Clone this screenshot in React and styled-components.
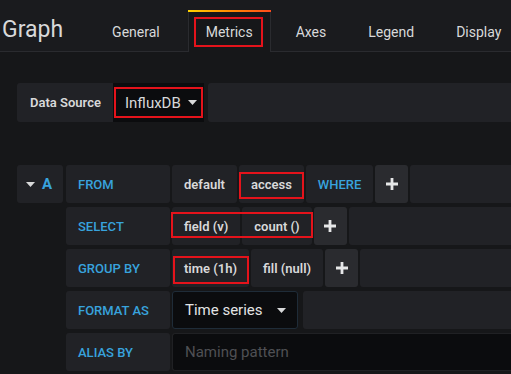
import styled, { createGlobalStyle } from "styled-components"

const GlobalStyle = createGlobalStyle`
    html, body {
        margin: 0;
        padding: 0;
        background: #161719;
        overflow: hidden;
    }
    body {
        font-family: Roboto, "Liberation Sans", sans-serif;
        color: #d8d9da;
    }
`

const tabs = ["General", "Metrics", "Axes", "Legend", "Display"]

const Caret = ({ color = "#d8d9da" }) => (
    <svg width="9" height="5" viewBox="0 0 9 5">
        <path d="M0 0h9L4.5 5z" fill={color} />
    </svg>
)

const PlusIcon = () => (
    <svg width="12" height="12" viewBox="0 0 12 12">
        <path d="M4.6 0h2.8v4.6H12v2.8H7.4V12H4.6V7.4H0V4.6h4.6z" fill="#e6e7e8" />
    </svg>
)

const App = () => {
    return (
        <>
            <GlobalStyle />
            <Header>
                <Title>Graph</Title>
                <Tabs>
                    {tabs.map(tab => (
                        <Tab key={tab} $active={tab === "Metrics"}>{tab}</Tab>
                    ))}
                </Tabs>
            </Header>

            <Main>
                <SourceRow>
                    <SourceLabel>Data Source</SourceLabel>
                    <Highlight $inset="4px 1px 4px 1px">
                        <Dropdown>
                            InfluxDB <Caret />
                        </Dropdown>
                    </Highlight>
                    <Filler $gap={4} />
                </SourceRow>

                <Query>
                    <Row>
                        <Toggle>
                            <Caret />
                            <span>A</span>
                        </Toggle>
                        <Keyword>FROM</Keyword>
                        <Segment>default</Segment>
                        <Highlight $inset="7px 0 4px 0">
                            <Segment>access</Segment>
                        </Highlight>
                        <Segment $blue>WHERE</Segment>
                        <Plus><PlusIcon /></Plus>
                        <Filler />
                    </Row>
                    <Row>
                        <Lead />
                        <Keyword>SELECT</Keyword>
                        <Highlight $inset="5px -1px 7px -1px">
                            <Segment>field (v)</Segment>
                            <Segment>count ()</Segment>
                        </Highlight>
                        <Plus><PlusIcon /></Plus>
                        <Filler />
                    </Row>
                    <Row>
                        <Lead />
                        <Keyword>GROUP BY</Keyword>
                        <Highlight $inset="7px 0 3px 1px">
                            <Segment>time (1h)</Segment>
                        </Highlight>
                        <Segment>fill (null)</Segment>
                        <Plus><PlusIcon /></Plus>
                        <Filler />
                    </Row>
                    <Row>
                        <Lead />
                        <Keyword>FORMAT AS</Keyword>
                        <Select>
                            Time series <Caret />
                        </Select>
                        <Filler $gap={3} />
                    </Row>
                    <Row>
                        <Lead />
                        <Keyword>ALIAS BY</Keyword>
                        <Input placeholder="Naming pattern" />
                    </Row>
                </Query>
            </Main>
        </>
    )
}

const Header = styled.header`
    height: 51px;
    display: flex;
    align-items: flex-end;
    background: #1a1b1e;
    border-bottom: 1px solid #2a2b2f;
`
const Title = styled.h1`
    margin: 0 32px 0 2px;
    align-self: center;
    font-size: 23px;
    font-weight: 400;
    color: #d8d9da;
    padding-top: 8px;
`
const Tabs = styled.nav`
    display: flex;
    gap: 8px;
    margin-bottom: -1px;
`
const Tab = styled.div`
    position: relative;
    height: 42px;
    padding: 0 16px;
    display: flex;
    align-items: center;
    font-size: 14px;
    color: #d8d9da;
    white-space: nowrap;
    box-sizing: border-box;
    border: 1px solid transparent;
    border-bottom: none;
    ${p => p.$active && `
        margin-left: 3px;
        padding: 0 17px;
        background: #161719;
        border-color: #2a2b2f;
        &::before {
            content: "";
            position: absolute;
            top: -1px;
            left: -1px;
            right: -1px;
            height: 2px;
            background: linear-gradient(90deg, #ffd200, #ff8a00 50%, #ff4a1c);
        }
        &::after {
            content: "";
            position: absolute;
            top: 6px;
            left: 5px;
            right: 7px;
            bottom: 5px;
            border: 2px solid #e4131b;
        }
    `}
`

const Main = styled.main`
    padding-left: 17px;
`
const SourceRow = styled.div`
    margin-top: 31px;
    height: 39px;
    display: flex;
`
const Cell = styled.div`
    height: 100%;
    display: flex;
    align-items: center;
    background: #212226;
    border-radius: 3px;
    box-sizing: border-box;
    white-space: nowrap;
`
const SourceLabel = styled(Cell)`
    width: 96px;
    padding-left: 13px;
    font-size: 13px;
    font-weight: 600;
    border-radius: 3px 0 0 3px;
`
const Dropdown = styled(Cell)`
    width: 91px;
    padding-left: 12px;
    gap: 7px;
    background: #0b0c0e;
    border-radius: 0;
    font-size: 15px;
    color: #d8d9da;
`
const Filler = styled(Cell)`
    flex: 1;
    margin-left: ${p => p.$gap || 0}px;
    border-radius: 3px 0 0 3px;
`

const Highlight = styled.div`
    position: relative;
    display: flex;
    gap: 2px;
    height: 100%;
    &::after {
        content: "";
        position: absolute;
        inset: ${p => p.$inset};
        border: 2px solid #e4131b;
        pointer-events: none;
    }
`

const Query = styled.section`
    margin-top: 43px;
    display: flex;
    flex-direction: column;
    gap: 4px;
`
const Row = styled.div`
    height: 38px;
    display: flex;
    gap: 2px;
`
const Lead = styled.div`
    width: 46px;
    margin-right: 1px;
    flex-shrink: 0;
`
const Toggle = styled(Cell)`
    width: 46px;
    margin-right: 1px;
    padding-left: 9px;
    gap: 7px;
    flex-shrink: 0;
    font-size: 15px;
    font-weight: 700;
    color: #38a3dd;
`
const Keyword = styled(Cell)`
    width: 104px;
    padding-left: 12px;
    flex-shrink: 0;
    font-size: 13px;
    font-weight: 500;
    color: #38a3dd;
`
const Segment = styled(Cell)`
    padding: 0 12px;
    font-size: 13px;
    font-weight: ${p => (p.$blue ? 500 : 600)};
    color: ${p => (p.$blue ? "#38a3dd" : "#d8d9da")};
`
const Plus = styled(Cell)`
    width: 33px;
    justify-content: center;
    background: #2a2b2f;
`
const Select = styled(Cell)`
    width: 126px;
    padding: 0 11px 0 12px;
    justify-content: space-between;
    background: #0b0c0e;
    border: 1px solid #1f2c38;
    font-size: 15px;
    color: #e3e4e5;
`
const Input = styled.input`
    flex: 1;
    height: 38px;
    box-sizing: border-box;
    padding: 0 12px;
    background: #0b0c0e;
    border: 1px solid #202124;
    border-right: none;
    border-radius: 3px 0 0 3px;
    font-family: Roboto, "Liberation Sans", sans-serif;
    font-size: 15px;
    color: #d8d9da;
    outline: none;
    &::placeholder {
        color: #4f5054;
    }
`

export default App
